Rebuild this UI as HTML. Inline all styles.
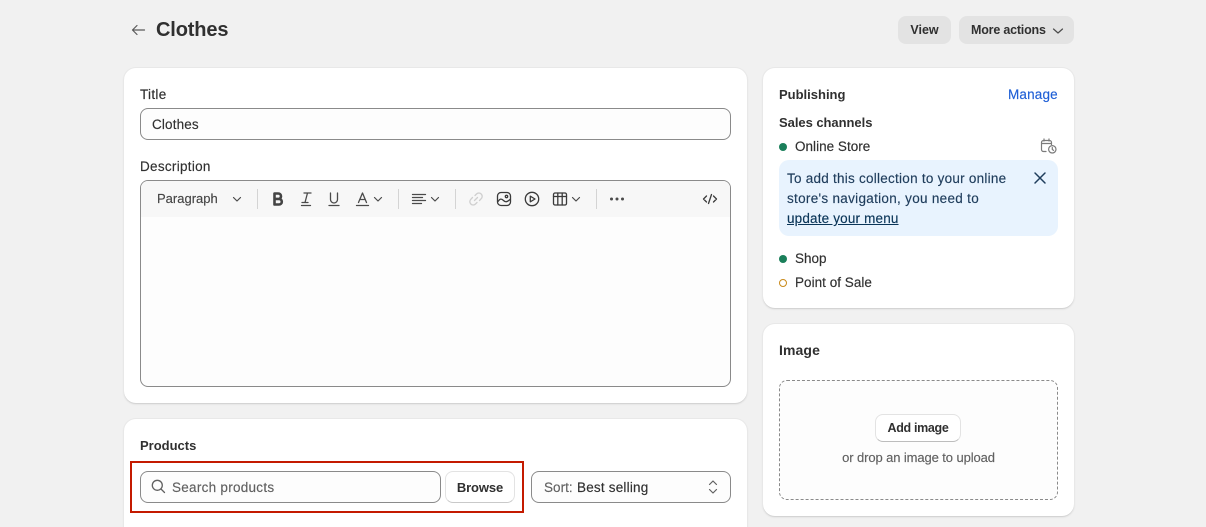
<!DOCTYPE html>
<html><head><meta charset="utf-8"><style>
html,body{margin:0;padding:0;width:1206px;height:527px;overflow:hidden;background:#f1f1f1;font-family:"Liberation Sans",sans-serif;color:#303030}
#p{position:relative;width:1206px;height:527px;overflow:hidden;background:#f1f1f1}
.a{position:absolute}
.t{position:absolute;white-space:nowrap;font-size:13.5px;line-height:16px;letter-spacing:.05px;-webkit-text-stroke:.15px}
.b{font-weight:700;font-size:13px;-webkit-text-stroke:0}
.card{position:absolute;background:#fff;border-radius:12px;box-shadow:0 1px 0 #d4d4d4,0 0 0 1px #e8e8e8,0 1px 2px rgba(0,0,0,.12)}
.inp{position:absolute;background:#fdfdfd;border:1px solid #8a8a8a;border-radius:8px;box-sizing:border-box}
.btn{position:absolute;background:#e3e3e3;border-radius:8px}
.dot{position:absolute;width:8px;height:8px;border-radius:50%;background:#1a7f5a}
.sep{position:absolute;top:189px;width:1px;height:20px;background:#d4d4d4}
svg{position:absolute;overflow:visible;fill:none;stroke:#4a4a4a;stroke-width:1.3;stroke-linecap:round;stroke-linejoin:round}
.c{stroke-width:1.2}
</style></head><body><div id="p">

<svg style="left:130px;top:22px;stroke:#5a5a5a;stroke-width:1.2" width="16" height="16" viewBox="0 0 16 16"><path d="M14.500 8H2.500M7 3.500L2.500 8 7 12.500"/></svg>
<div class="t b" style="left:156px;top:18px;font-size:20px;line-height:24px;letter-spacing:-.15px">Clothes</div>

<div class="btn" style="left:898px;top:16px;width:53px;height:28px"></div>
<div class="t b" style="left:898px;width:53px;text-align:center;top:22px;font-size:12.500px;letter-spacing:0">View</div>
<div class="btn" style="left:959px;top:16px;width:115px;height:28px"></div>
<div class="t b" style="left:971px;top:22px;font-size:12.500px;letter-spacing:-.2px">More actions</div>
<svg class="c" style="left:1051px;top:25px" width="14" height="12" viewBox="0 0 14 12"><path d="M2.500 4L7 8l4.500-4"/></svg>

<!-- Title card -->
<div class="card" style="left:124px;top:68px;width:623px;height:335px"></div>
<div class="t" style="left:140px;top:87px;letter-spacing:.3px">Title</div>
<div class="inp" style="left:140px;top:108px;width:591px;height:32px"></div>
<div class="t" style="left:152px;top:117px;letter-spacing:.15px">Clothes</div>
<div class="t" style="left:140px;top:159px;letter-spacing:.29px">Description</div>

<div class="inp" style="left:140px;top:180px;width:591px;height:207px;background:#fdfdfd"></div>
<div class="a" style="left:141px;top:181px;width:589px;height:36px;background:#f7f7f7;border-radius:7px 7px 0 0"></div>
<div class="t" style="left:157px;top:191px;font-size:13px;letter-spacing:0;color:#444">Paragraph</div>
<svg class="c" style="left:231px;top:193px" width="12" height="12" viewBox="0 0 12 12"><path d="M2.500 4.500L6 8l3.500-3.500"/></svg>
<div class="sep" style="left:257px"></div>
<svg style="left:271px;top:191px;stroke-width:2.600;stroke:#444" width="14" height="16" viewBox="0 0 14 16"><path d="M3.500 2.500h3.800a2.700 2.700 0 0 1 0 5.400H3.500zM3.500 7.900h4.500a2.800 2.800 0 0 1 0 5.600H3.500z"/></svg>
<svg style="left:299px;top:191px" width="14" height="16" viewBox="0 0 14 16"><path d="M5 2h7M3 11.500h6M8.500 2L6 11.500M2.500 14.500h9"/></svg>
<svg style="left:327px;top:191px" width="14" height="16" viewBox="0 0 14 16"><path d="M3.500 2v6.500a3.500 3.500 0 0 0 7 0V2M2 14.500h10"/></svg>
<svg style="left:355px;top:191px" width="16" height="16" viewBox="0 0 16 16"><path d="M3.500 11.500L7.500 2l4 9.500M5 8.500h5M1.500 14.500h12"/></svg>
<svg class="c" style="left:372px;top:193px" width="12" height="12" viewBox="0 0 12 12"><path d="M2.500 4.500L6 8l3.500-3.500"/></svg>
<div class="sep" style="left:398px"></div>
<svg style="left:411px;top:191px" width="16" height="16" viewBox="0 0 16 16"><path d="M1.500 3.500h13M1.500 6.500h10M1.500 9.500h13M1.500 12.500h9"/></svg>
<svg class="c" style="left:429px;top:193px" width="12" height="12" viewBox="0 0 12 12"><path d="M2.500 4.500L6 8l3.500-3.500"/></svg>
<div class="sep" style="left:455px"></div>
<svg style="left:468px;top:191px;stroke:#cfcfcf" width="16" height="16" viewBox="0 0 16 16"><path d="M6.500 9.500l3-3M7 4.500l1.500-1.500a3.300 3.300 0 0 1 4.700 4.700L11.500 9.500M9 11.500l-1.500 1.500a3.300 3.300 0 0 1-4.700-4.700L4.500 6.500"/></svg>
<svg style="left:496px;top:191px;stroke:#3a3a3a" width="16" height="16" viewBox="0 0 16 16"><rect x="1.500" y="1.500" width="13" height="13" rx="3.500"/><path d="M2 10.500c2-3 3.500-3 5.500-1s3.500 1.500 6.500-1"/><circle cx="10.500" cy="5.500" r="1.200"/></svg>
<svg style="left:524px;top:191px;stroke:#3a3a3a" width="16" height="16" viewBox="0 0 16 16"><circle cx="8" cy="8" r="6.700"/><path d="M6.300 5.200v5.600L11 8z"/></svg>
<svg style="left:552px;top:191px;stroke:#3a3a3a" width="16" height="16" viewBox="0 0 16 16"><rect x="1.500" y="2" width="13" height="12" rx="1.500"/><path d="M1.500 5.500h13M5.800 2v12M10.200 2v12"/></svg>
<svg class="c" style="left:570px;top:193px" width="12" height="12" viewBox="0 0 12 12"><path d="M2.500 4.500L6 8l3.500-3.500"/></svg>
<div class="sep" style="left:596px"></div>
<svg style="left:609px;top:191px;fill:#4a4a4a;stroke:none" width="16" height="16" viewBox="0 0 16 16"><circle cx="2.500" cy="8" r="1.500"/><circle cx="8" cy="8" r="1.500"/><circle cx="13.500" cy="8" r="1.500"/></svg>
<svg style="left:702px;top:191px;stroke:#3a3a3a" width="16" height="16" viewBox="0 0 16 16"><path d="M4.500 5L1.500 8l3 3M11.500 5l3 3-3 3M9.500 3.500L6.500 12.500"/></svg>

<!-- Products -->
<div class="card" style="left:124px;top:419px;width:623px;height:130px"></div>
<div class="t b" style="left:140px;top:438px;letter-spacing:0">Products</div>
<div class="inp" style="left:140px;top:471px;width:301px;height:32px"></div>
<svg style="left:151px;top:479px;stroke:#616161" width="15" height="15" viewBox="0 0 15 15"><circle cx="6.300" cy="6.300" r="5"/><path d="M10 10l3.500 3.500"/></svg>
<div class="t" style="left:172px;top:480px;color:#616161;letter-spacing:.27px">Search products</div>
<div class="a" style="left:445px;top:471px;width:70px;height:32px;box-sizing:border-box;background:#fff;border:1px solid #e3e3e3;border-bottom-color:#c9c9c9;border-radius:8px"></div>
<div class="t b" style="left:445px;width:70px;text-align:center;top:480px;letter-spacing:-.1px">Browse</div>
<div class="inp" style="left:531px;top:471px;width:200px;height:32px"></div>
<div class="t" style="left:544px;top:480px;color:#616161;letter-spacing:.03px">Sort:</div>
<div class="t" style="left:577px;top:480px;letter-spacing:.2px">Best selling</div>
<svg class="c" style="left:707px;top:479px;stroke:#616161" width="12" height="16" viewBox="0 0 12 16"><path d="M2.500 5.500L6 2l3.500 3.500M2.500 10.500L6 14l3.500-3.500"/></svg>
<div class="a" style="left:130px;top:461px;width:394px;height:52px;box-sizing:border-box;border:2.500px solid #c41a00"></div>

<!-- Publishing -->
<div class="card" style="left:763px;top:68px;width:311px;height:240px"></div>
<div class="t b" style="left:779px;top:87px;letter-spacing:0">Publishing</div>
<div class="t" style="left:1008px;top:87px;color:#1f5fd6;letter-spacing:.17px">Manage</div>
<div class="t b" style="left:779px;top:115px;letter-spacing:-.04px">Sales channels</div>
<div class="dot" style="left:779px;top:143px"></div>
<div class="t" style="left:795px;top:139px;letter-spacing:.02px">Online Store</div>
<svg style="left:1040px;top:138px;stroke:#7a7a7a;stroke-width:1.200" width="17" height="16" viewBox="0 0 17 16"><path d="M6 13.500H3.500a2 2 0 0 1-2-2V4.500a2 2 0 0 1 2-2h6a2 2 0 0 1 2 2v2M1.500 5.500h10M4 1v2M9 1v2"/><circle cx="12.300" cy="11.300" r="3.700"/><path d="M12.300 9.500v2l1.300.9"/></svg>

<div class="a" style="left:779px;top:160px;width:279px;height:76px;background:#e8f3fe;border-radius:10px"></div>
<div class="t" style="left:787px;top:171px;color:#1f3d5c;letter-spacing:.25px">To add this collection to your online</div>
<div class="t" style="left:787px;top:191px;color:#1f3d5c;letter-spacing:.3px">store's navigation, you need to</div>
<div class="t" style="left:787px;top:211px;color:#0a3558;letter-spacing:.17px;text-decoration:underline">update your menu</div>
<svg style="left:1033px;top:171px;stroke:#1f3d5c;stroke-width:1.500" width="14" height="14" viewBox="0 0 14 14"><path d="M2 2l10 10M12 2L2 12"/></svg>

<div class="dot" style="left:779px;top:255px"></div>
<div class="t" style="left:795px;top:251px;letter-spacing:0">Shop</div>
<div class="dot" style="left:779px;top:279px;background:#fff;border:1.500px solid #c98a1a;box-sizing:border-box"></div>
<div class="t" style="left:795px;top:275px;letter-spacing:.03px">Point of Sale</div>

<!-- Image -->
<div class="card" style="left:763px;top:324px;width:311px;height:192px"></div>
<div class="t b" style="left:779px;top:341px;font-size:14px;line-height:18px;letter-spacing:.1px">Image</div>
<div class="a" style="left:779px;top:380px;width:279px;height:120px;box-sizing:border-box;background:#fdfdfd;border:1px dashed #8a8a8a;border-radius:8px"></div>
<div class="a" style="left:875px;top:414px;width:86px;height:28px;box-sizing:border-box;background:#fff;border:1px solid #e3e3e3;border-bottom-color:#bdbdbd;border-radius:8px"></div>
<div class="t b" style="left:875px;width:86px;text-align:center;top:420px;font-size:12.500px;letter-spacing:-.33px">Add image</div>
<div class="t" style="left:779px;width:279px;text-align:center;top:450px;font-size:13px;color:#616161;letter-spacing:-.1px">or drop an image to upload</div>

</div></body></html>
